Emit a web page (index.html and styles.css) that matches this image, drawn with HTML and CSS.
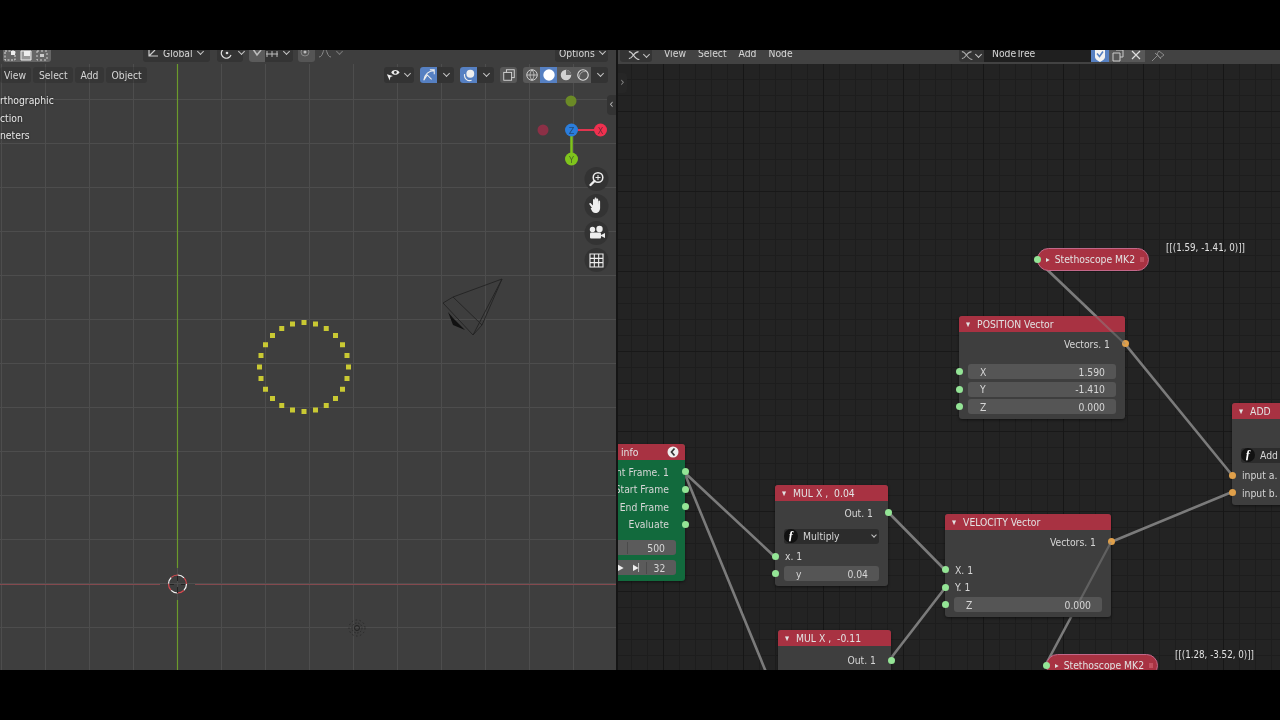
FILE: index.html
```html
<!DOCTYPE html>
<html lang="en">
<head>
  <meta charset="UTF-8">
  <title>Blender - Sverchok node tree</title>
  <link rel="stylesheet" href="styles.css">
</head>
<body>

  <div class="letterbox"></div>

  <div class="workspace">

    <!-- 3D viewport -->
    <div class="viewport">
      <div class="view-bar">
        <div class="pill mode-group">
          <svg class="ico" viewBox="0 0 14 12"><path d="M2 1h10v9H2z" fill="none" stroke="#ddd" stroke-dasharray="2 1.5"/><rect x="8" y="1" width="4" height="4" fill="#eee"/></svg>
          <svg class="ico" viewBox="0 0 14 12"><path d="M2 1h10v9H2z" fill="#999" stroke="#eee"/><rect x="5" y="1" width="6" height="5" fill="#eee"/></svg>
          <svg class="ico" viewBox="0 0 14 12"><path d="M2 1h10v9H2z" fill="none" stroke="#ccc" stroke-dasharray="2 2"/><rect x="5" y="4" width="4" height="3" fill="#ccc"/></svg>
        </div>
        <div class="pill dark global">
          <svg class="ico" viewBox="0 0 14 12"><path d="M3 1v8h9M3 9l6-6" fill="none" stroke="#ccc" stroke-width="1.2"/></svg>
          <span class="global-name">Global</span><span class="chev"></span>
        </div>
        <div class="pill dark pivot">
          <svg class="ico" viewBox="0 0 14 12"><path d="M9 2a5 5 0 1 0 2 6" fill="none" stroke="#ddd" stroke-width="1.2"/><circle cx="7" cy="6" r="1.3" fill="#ddd"/></svg>
          <span class="chev"></span>
        </div>
        <div class="pill dark snap">
          <span class="snap-magnet"><svg class="ico" viewBox="0 0 14 12"><path d="M3 2l4 6 4-5M9 1l2 2" fill="none" stroke="#bbb" stroke-width="1.6"/></svg></span>
          <svg class="ico" viewBox="0 0 14 12"><path d="M1 7h12M2 4v6M7 4v6M12 4v6" fill="none" stroke="#bbb"/></svg>
          <span class="chev"></span>
        </div>
        <div class="pill prop"><svg class="ico" viewBox="0 0 14 12"><circle cx="7" cy="5" r="4" fill="none" stroke="#888"/><circle cx="7" cy="5" r="1.5" fill="#bbb"/></svg></div>
        <div class="pill fall">
          <svg class="ico" viewBox="0 0 14 12"><path d="M1 10c4 0 4-8 6-8s2 8 6 8" fill="none" stroke="#8a8a8a"/></svg>
          <span class="chev dim"></span>
        </div>
        <div class="spacer"></div>
        <div class="pill dark options">Options<span class="chev"></span></div>
      </div>

      <div class="tool-bar">
        <div class="menu-group">
          <span class="menu-item">View</span>
          <span class="menu-item">Select</span>
          <span class="menu-item">Add</span>
          <span class="menu-item">Object</span>
        </div>
        <div class="spacer"></div>
        <div class="shade-group">
          <div class="pill-row dark eye-btn">
            <svg class="ico-lg" viewBox="0 0 16 14"><path d="M6 4c2-3.500 7-3.500 9.500 0c-2.500 3.500-7.500 3.500-9.500 0z" fill="#eee"/><circle cx="10.700" cy="4" r="1.600" fill="#333"/><path d="M1 6l7 2-3 1.200-.8 4z" fill="#eee"/></svg>
            <span class="chev"></span>
          </div>
          <div class="pill-row dark">
            <span class="tog on"><svg class="ico-lg" viewBox="0 0 16 16"><path d="M2 14C3 7 8 3 14 3M9 2h5v5M2 14l4-6 5 5" fill="none" stroke="#eee" stroke-width="1.2"/></svg></span>
            <span class="tog"><span class="chev"></span></span>
          </div>
          <div class="pill-row dark">
            <span class="tog on"><svg class="ico-lg" viewBox="0 0 16 16"><circle cx="9.500" cy="6.500" r="4.500" fill="#eee"/><path d="M3 7a6 6 0 0 0 8 7" fill="none" stroke="#eee" stroke-width="1.3"/></svg></span>
            <span class="tog"><span class="chev"></span></span>
          </div>
          <div class="tog gray xray"><svg class="ico-lg" viewBox="0 0 16 16"><rect x="5" y="2" width="9" height="9" fill="none" stroke="#ddd"/><rect x="2" y="5" width="9" height="9" fill="#4a4a4a" stroke="#ddd"/></svg></div>
          <div class="pill-row shading">
            <span class="tog gray"><svg class="ico-lg" viewBox="0 0 16 16"><circle cx="8" cy="8" r="6" fill="none" stroke="#ddd"/><path d="M2 8h12M8 2c-3 4-3 8 0 12M8 2c3 4 3 8 0 12" fill="none" stroke="#ddd" stroke-width=".8"/></svg></span>
            <span class="tog on"><svg class="ico-lg" viewBox="0 0 16 16"><circle cx="8" cy="8" r="6.500" fill="#fff"/></svg></span>
            <span class="tog gray"><svg class="ico-lg" viewBox="0 0 16 16"><circle cx="8" cy="8" r="6" fill="#d2d2d2"/><path d="M8 2a6 6 0 0 1 6 6H8z" fill="#6e6e6e"/></svg></span>
            <span class="tog gray"><svg class="ico-lg" viewBox="0 0 16 16"><circle cx="8" cy="8" r="6" fill="none" stroke="#ddd" stroke-width="1.300"/><path d="M4 11a6 6 0 0 1 7-7" fill="none" stroke="#aaa"/></svg></span>
            <span class="tog plain"><span class="chev"></span></span>
          </div>
        </div>
      </div>

      <div class="view-info">
        <div>rthographic</div>
        <div>ction</div>
        <div>neters</div>
      </div>

      <!-- scene, all in screen coordinates -->
      <svg class="scene" viewBox="0 50 616 620">
        <path d="M177.500 64V568M177.500 600V670" stroke="#6c9a2c" stroke-width="1.200" fill="none"/>
        <path d="M0 584.500H160M195 584.500H616" stroke="#84494e" stroke-width="1.200" fill="none"/>

        <!-- circle verts -->
        <path fill="#c9c933" d="M301.500 320h5v5h-5zM313 321.500h5v5h-5zM323.750 326h5v5h-5zM333 333h5v5h-5zM340 342.250h5v5h-5zM344.500 353h5v5h-5zM346 364.500h5v5h-5zM344.500 376h5v5h-5zM340 386.750h5v5h-5zM333 396h5v5h-5zM323.750 403h5v5h-5zM313 407.500h5v5h-5zM301.500 409h5v5h-5zM290 407.500h5v5h-5zM279.250 403h5v5h-5zM270 396h5v5h-5zM263 386.750h5v5h-5zM258.500 376h5v5h-5zM257 364.500h5v5h-5zM258.500 353h5v5h-5zM263 342.250h5v5h-5zM270 333h5v5h-5zM279.250 326h5v5h-5zM290 321.500h5v5h-5z"/>

        <!-- camera -->
        <path d="M448 312l5 13 12 5-12-12z" fill="#111"/>
        <path d="M502 279L453 297L443 303L473 335L482 325L453 297M502 279L482 325M502 279L473 335" fill="none" stroke="#222" stroke-width=".9"/>

        <!-- 3d cursor -->
        <circle cx="177.500" cy="584" r="9" fill="none" stroke="#f2f2f2" stroke-width="1.200" stroke-dasharray="7 7.140"/>
        <circle cx="177.500" cy="584" r="9" fill="none" stroke="#d8484f" stroke-width="1.200" stroke-dasharray="7 7.140" stroke-dashoffset="7"/>
        <path d="M177.500 576V581M177.500 587V593M170 584.500H174M181 584.500H185" stroke="#222" fill="none"/>

        <!-- light -->
        <circle cx="357" cy="628" r="2.500" fill="none" stroke="#222"/>
        <circle cx="357" cy="628" r="5" fill="none" stroke="#2a2a2a" stroke-dasharray="1.500 1.500"/>
        <circle cx="357" cy="628" r="8" fill="none" stroke="#2a2a2a" stroke-dasharray="1.500 2.500"/>

        <!-- gizmo -->
        <circle cx="571" cy="101" r="5.500" fill="#6b8a26"/>
        <circle cx="543" cy="130" r="5.500" fill="#8c3046"/>
        <path d="M577 130H595" stroke="#e0354f" stroke-width="2"/>
        <path d="M571.500 136V154" stroke="#7fc41c" stroke-width="2.500"/>
        <circle cx="571.500" cy="130" r="6.500" fill="#2a7ddc"/>
        <circle cx="600.500" cy="130" r="6.500" fill="#f0304f"/>
        <circle cx="571.500" cy="159" r="6.500" fill="#7fc41c"/>
        <text class="axis" x="571.500" y="133.500">Z</text>
        <text class="axis" x="600.500" y="133.500">X</text>
        <text class="axis" x="571.500" y="162.500">Y</text>

        <!-- nav buttons -->
        <circle cx="596.500" cy="179" r="12" fill="#333"/>
        <circle cx="596.500" cy="206" r="12" fill="#333"/>
        <circle cx="596.500" cy="233" r="12" fill="#333"/>
        <circle cx="596.500" cy="260" r="12" fill="#333"/>
        <circle cx="598" cy="177.500" r="4.800" fill="none" stroke="#eee" stroke-width="1.500"/>
        <path d="M594.500 181L590.500 185" stroke="#eee" stroke-width="2.400" stroke-linecap="round"/>
        <path d="M595.500 177.500H600.500M598 175V180" stroke="#eee"/>
        <path d="M592 208l-2.500-3.500c-.7-1 .6-2 1.500-1l2 2V200c0-1.300 1.700-1.300 1.700 0v3.500V198.500c0-1.300 1.800-1.300 1.800 0v5V199.500c0-1.300 1.700-1.300 1.700 0v5l.2-3c0-1.300 1.700-1.200 1.700 0V208c0 3-2 5-4.500 5s-4-2-5-5z" fill="#eee"/>
        <circle cx="592.500" cy="229.500" r="2.700" fill="#eee"/>
        <circle cx="599.500" cy="229" r="3.200" fill="#eee"/>
        <rect x="590" y="232.500" width="11" height="6" rx="1" fill="#eee"/>
        <path d="M601 235l4-2v5l-4-2z" fill="#eee"/>
        <path d="M590 254h13v13h-13zM594.330 254v13M598.670 254v13M590 258.330h13M590 262.670h13" fill="none" stroke="#eee" stroke-width="1.100"/>
      </svg>

      <span class="side-tab">‹</span>
    </div>

    <!-- node editor -->
    <div class="editor">
      <div class="editor-bar">
        <div class="pill dark editor-type">
          <svg class="ico" viewBox="0 0 16 12"><path d="M1 1c5 0 6 9 12 9M1 9c5 0 4-7 11-8" fill="none" stroke="#ccc" stroke-width="1.300"/></svg>
          <span class="chev"></span>
        </div>
        <span class="bar-item">View</span>
        <span class="bar-item">Select</span>
        <span class="bar-item">Add</span>
        <span class="bar-item">Node</span>
        <div class="spacer"></div>
        <div class="pill dark tree-type">
          <svg class="ico" viewBox="0 0 16 12"><path d="M1 1c5 0 6 9 12 9M1 9c5 0 4-7 11-8" fill="none" stroke="#aaa" stroke-width="1.200"/></svg>
          <span class="chev"></span>
        </div>
        <div class="tree-name">NodeTree</div>
        <div class="tree-btn blue"><svg class="ico" viewBox="0 0 14 12"><path d="M2 0h10v7c0 2-3 4-5 5-2-1-5-3-5-5z" fill="#f2f2f2"/><path d="M4 3.500l2.500 3L10 1.500" fill="none" stroke="#5680c2" stroke-width="1.600"/></svg></div>
        <div class="tree-btn"><svg class="ico" viewBox="0 0 14 12"><path d="M5 0h7v7H9M2 3h7v8H2z" fill="none" stroke="#ccc"/></svg></div>
        <div class="tree-btn"><svg class="ico" viewBox="0 0 14 12"><path d="M3 1l8 8M11 1L3 9" fill="none" stroke="#ddd" stroke-width="1.200"/></svg></div>
        <div class="tree-pin"><svg class="ico" viewBox="0 0 14 12"><path d="M1 11l5-5M4 3l6 6M8 1l5 4-4 3-3-4z" fill="none" stroke="#888"/></svg></div>
      </div>

      <span class="side-tab open">›</span>

      <svg class="links" viewBox="618 50 662 620">
        <path d="M684 472L775 557M684 472L766 672M888 512L945 570M891 658L945 588M1111 542L1232 492M1036 259L1125 344L1232 475M1111 542L1045 666" fill="none" stroke="#7b7b7b" stroke-width="2.600"/>
      </svg>

      <div class="node node-info">
        <div class="node-head"><span class="info-title">info</span><span class="rewind"><svg viewBox="0 0 12 12"><circle cx="6" cy="6" r="5.500" fill="#eee"/><path d="M7.500 2.500L4.500 6l3 3.500" fill="none" stroke="#333" stroke-width="1.700"/></svg></span></div>
        <div class="node-body">
          <div class="row out">nt Frame. 1<i class="socket right"></i></div>
          <div class="row out">Start Frame<i class="socket right"></i></div>
          <div class="row out">End Frame<i class="socket right"></i></div>
          <div class="row out">Evaluate<i class="socket right"></i></div>
          <div class="info-field first"><span>1</span><span class="seg">500</span></div>
          <div class="info-field"><span class="play">▶</span><span class="play step">▶|</span><span class="seg mid">32</span></div>
        </div>
      </div>

      <div class="node node-mul1">
        <div class="node-head"><span class="caret">▾</span>MUL X ,&nbsp; 0.04</div>
        <div class="node-body">
          <div class="row out">Out. 1<i class="socket right"></i></div>
          <div class="select"><span class="fx">ƒ</span>Multiply<span class="chev"></span></div>
          <div class="row in">x. 1<i class="socket left"></i></div>
          <div class="row"><div class="field"><span>y</span><span>0.04</span></div><i class="socket left"></i></div>
        </div>
      </div>

      <div class="node node-mul2">
        <div class="node-head"><span class="caret">▾</span>MUL X ,&nbsp; -0.11</div>
        <div class="node-body">
          <div class="row out out-wide">Out. 1<i class="socket right"></i></div>
        </div>
      </div>

      <div class="node wide node-position">
        <div class="node-head"><span class="caret">▾</span>POSITION Vector</div>
        <div class="node-body">
          <div class="row out">Vectors. 1<i class="socket right orange"></i></div>
          <div class="gap"></div>
          <div class="row"><div class="field"><span>X</span><span>1.590</span></div><i class="socket left"></i></div>
          <div class="row"><div class="field"><span>Y</span><span>-1.410</span></div><i class="socket left"></i></div>
          <div class="row"><div class="field"><span>Z</span><span>0.000</span></div><i class="socket left"></i></div>
        </div>
      </div>

      <div class="node wide node-velocity">
        <div class="node-head"><span class="caret">▾</span>VELOCITY Vector</div>
        <div class="node-body">
          <div class="row out">Vectors. 1<i class="socket right orange"></i></div>
          <div class="gap"></div>
          <div class="row in">X. 1<i class="socket left"></i></div>
          <div class="row in">Y. 1<i class="socket left"></i></div>
          <div class="row"><div class="field"><span>Z</span><span>0.000</span></div><i class="socket left"></i></div>
        </div>
      </div>

      <div class="node node-add">
        <div class="node-head"><span class="caret">▾</span>ADD</div>
        <div class="node-body">
          <div class="row out"></div>
          <div class="select"><span class="fx">ƒ</span>Add<span class="chev"></span></div>
          <div class="row in">input a.<i class="socket left orange"></i></div>
          <div class="row in">input b.<i class="socket left orange"></i></div>
        </div>
      </div>

      <div class="scope scope-a"><i class="socket left"></i><span class="scope-caret">▸</span>Stethoscope MK2<span class="scope-bars">ıı</span></div>
      <div class="scope-note note-a">[[(1.59, -1.41, 0)]]</div>

      <div class="scope scope-b"><i class="socket left"></i><span class="scope-caret">▸</span>Stethoscope MK2<span class="scope-bars">ıı</span></div>
      <div class="scope-note note-b">[[(1.28, -3.52, 0)]]</div>

      <!-- links show faintly through the nodes they cross -->
      <svg class="links over" viewBox="618 50 662 620">
        <path d="M1085 306L1125 344M1111 542L1078 604" fill="none" stroke="#8a8a8a" stroke-width="2.200"/>
      </svg>
    </div>

  </div>

  <div class="letterbox"></div>

</body>
</html>
```

FILE: styles.css
```css
* {
  box-sizing: border-box;
}

html, body {
  margin: 0;
  height: 720px;
  overflow: hidden;
  background-color: #000;
}

body {
  font-family: "DejaVu Sans Condensed", "DejaVu Sans", sans-serif;
  font-stretch: condensed;
  font-size: 10.3px;
  color: #d6d6d6;
}

.letterbox {
  height: 50px;
  background-color: #000;
}

.workspace {
  display: flex;
  height: 620px;
  gap: 2px;
  background-color: #151515;
  overflow: hidden;
  filter: blur(.35px);
}

.spacer {
  flex: 1;
}

/* 3D viewport */
.viewport {
  position: relative;
  width: 616px;
  overflow: hidden;
  background-color: #3e3e3e;
  background-image:
    linear-gradient(to right, #4d4d4d 1px, transparent 1px),
    linear-gradient(to bottom, #4d4d4d 1px, transparent 1px);
  background-size: 44px 44px;
  background-position: 1px 0, 0 5px;
}

.scene {
  position: absolute;
  left: 0;
  top: 0;
  width: 616px;
  height: 620px;
}

.axis {
  font-size: 9px;
  text-anchor: middle;
  fill: #20242c;
  fill-opacity: .6;
}

.view-bar {
  position: relative;
  z-index: 1;
  display: flex;
  align-items: flex-start;
  height: 14px;
  padding-right: 8px;
  background-color: #3e3e3e;
  overflow: hidden;
}

.pill {
  display: flex;
  align-items: center;
  height: 22px;
  margin-top: -10px;
  padding-top: 4px;
  border-radius: 3px;
}

.pill.dark {
  background-color: #343434;
}

.ico {
  width: 14px;
  height: 12px;
  flex: none;
}

.ico-lg {
  width: 14px;
  height: 14px;
  flex: none;
}

.chev {
  width: 5px;
  height: 5px;
  margin: -3px 4px 0 5px;
  flex: none;
  border-right: 1px solid #c4c4c4;
  border-bottom: 1px solid #c4c4c4;
  transform: rotate(45deg);
}

.chev.dim {
  border-color: #777;
}

.mode-group {
  margin-left: 3px;
  width: 48px;
  gap: 2px;
  padding-top: 9px;
  background-color: #666;
}

.global {
  margin-left: 92px;
  width: 67px;
  padding-left: 3px;
  justify-content: space-between;
}

.global-name {
  margin-left: 3px;
  flex: 1;
}

.global .chev {
  margin-right: 7px;
}

.pivot {
  margin-left: 7px;
  width: 26px;
  padding-left: 3px;
}

.snap {
  margin-left: 6px;
  width: 44px;
}

.snap-magnet {
  display: flex;
  align-items: center;
  height: 100%;
  padding: 0 1px;
  border-radius: 3px 0 0 3px;
  background-color: #5b5b5b;
}

.prop {
  margin-left: 5px;
  width: 17px;
  background-color: #555;
}

.fall {
  margin-left: 3px;
}

.options {
  width: 53px;
  padding-left: 4px;
  justify-content: space-between;
}

.tool-bar {
  position: relative;
  z-index: 1;
  display: flex;
  align-items: center;
  height: 22px;
  padding-right: 8px;
}

.menu-group {
  display: flex;
  gap: 2px;
}

.menu-item {
  display: flex;
  align-items: center;
  height: 16px;
  padding: 0 5.500px;
  border-radius: 3px;
  background-color: rgba(40, 40, 40, .35);
}

.menu-item:first-child {
  padding-left: 4px;
}

.shade-group {
  display: flex;
  align-items: center;
  gap: 6px;
}

.pill-row {
  display: flex;
  align-items: center;
  height: 16px;
  border-radius: 3px;
}

.pill-row.dark {
  background-color: #333;
}

.eye-btn {
  padding-left: 2px;
}

.tog {
  display: flex;
  align-items: center;
  justify-content: center;
  height: 16px;
  width: 17px;
}

.tog.on {
  background-color: #5680c2;
  border-radius: 3px 0 0 3px;
}

.tog.gray {
  background-color: #585858;
}

.xray {
  border-radius: 3px;
}

.shading .tog.on {
  border-radius: 0;
}

.shading .tog:first-child {
  border-radius: 3px 0 0 3px;
}

.tog.plain {
  background-color: #333;
  border-radius: 0 3px 3px 0;
}

.view-info {
  position: absolute;
  z-index: 1;
  left: 0;
  top: 42px;
  color: #e8e8e8;
  line-height: 17.500px;
  text-shadow: 0 0 2px #222;
}

.side-tab {
  position: absolute;
  z-index: 1;
  right: 0;
  top: 45px;
  width: 9px;
  height: 20px;
  line-height: 18px;
  text-align: center;
  border-radius: 4px 0 0 4px;
  background-color: #333;
  color: #bbb;
  font-size: 12px;
}

.side-tab.open {
  right: auto;
  left: 0;
  top: 23px;
  border-radius: 0 4px 4px 0;
  background-color: #262626;
  color: #888;
}

/* Node editor */
.editor {
  position: relative;
  flex: 1;
  overflow: hidden;
  background-color: #232323;
  background-image:
    linear-gradient(to right, #161616 1px, transparent 1px),
    linear-gradient(to bottom, #181818 1px, transparent 1px),
    linear-gradient(to right, #1d1d1d 1px, transparent 1px),
    linear-gradient(to bottom, #1d1d1d 1px, transparent 1px);
  background-size: 80px 80px, 80px 80px, 16px 16px, 16px 16px;
  background-position: 45px 0, 0 61px, 13px 0, 0 13px;
}

.editor-bar {
  position: relative;
  z-index: 2;
  display: flex;
  align-items: flex-start;
  height: 14px;
  padding-right: 115px;
  background-color: #424242;
  overflow: hidden;
}

.editor-type {
  margin-left: 2px;
  width: 32px;
  padding: 9px 0 0 8px;
  background-color: #333;
}

.editor-type .chev {
  margin-left: 2px;
}

.bar-item {
  margin-top: -3px;
  line-height: 12px;
  margin-left: 12px;
}

.tree-type {
  width: 25px;
  padding: 9px 0 0 2px;
  border-radius: 3px 0 0 3px;
}

.tree-type .chev {
  margin-left: 1px;
}

.tree-name {
  width: 107px;
  height: 12px;
  padding-left: 8px;
  line-height: 6px;
  background-color: #1f1f1f;
}

.tree-btn {
  display: flex;
  align-items: center;
  justify-content: center;
  width: 18px;
  height: 12px;
  background-color: #585858;
}

.tree-btn.blue {
  background-color: #5680c2;
}

.tree-pin {
  margin-left: 6px;
  line-height: 0;
}

.links {
  position: absolute;
  left: 0;
  top: 0;
  width: 662px;
  height: 620px;
}

.links.over {
  z-index: 1;
  opacity: .45;
}

.node {
  position: absolute;
  z-index: 1;
  width: 113px;
  border-radius: 3px;
  background-color: #3e3e3e;
  box-shadow: 0 1px 3px rgba(0, 0, 0, .5);
}

.node.wide {
  width: 166px;
}

.node-head {
  display: flex;
  align-items: center;
  height: 16px;
  padding-left: 7px;
  border-radius: 3px 3px 0 0;
  background-color: #a83242;
  color: #e2e2e2;
  white-space: nowrap;
}

.caret {
  margin-right: 7px;
  font-size: 9px;
}

.node-body {
  padding: 3px 0 3.500px;
}

.row {
  position: relative;
  display: flex;
  align-items: center;
  height: 17.500px;
  padding: 0 9px;
}

.row.out {
  justify-content: flex-end;
  padding-right: 15px;
}

.row.in {
  padding-left: 10px;
}

.gap {
  height: 10.500px;
}

.socket {
  position: absolute;
  top: 50%;
  width: 7px;
  height: 7px;
  margin-top: -3.500px;
  border-radius: 50%;
  background-color: #94e596;
}

.socket.left {
  left: -3.500px;
}

.socket.right {
  right: -3.500px;
}

.socket.orange {
  background-color: #e0a04a;
}

.field {
  display: flex;
  justify-content: space-between;
  align-items: center;
  flex: 1;
  height: 15px;
  padding: 0 11px 0 12px;
  border-radius: 3px;
  background-color: #555;
}

.select {
  display: flex;
  align-items: center;
  height: 15px;
  margin: 7px 9px 4px;
  border-radius: 3px;
  background-color: #2c2c2c;
}

.select .chev {
  margin-left: auto;
  margin-right: 3px;
  width: 4px;
  height: 4px;
}

.fx {
  width: 14px;
  height: 14px;
  margin-right: 5px;
  border-radius: 50%;
  background-color: #111;
  color: #fff;
  font: italic bold 12px/13px "Liberation Serif", serif;
  text-align: center;
}

.node-info {
  left: -60px;
  top: 394px;
  width: 127px;
  height: 137px;
  background-color: #126a3d;
}

.node-info .node-head {
  justify-content: space-between;
  padding: 0 6px 0 63px;
}

.rewind {
  width: 12px;
  height: 12px;
  line-height: 0;
}

.node-info .row.out {
  padding-right: 16px;
}

.info-field {
  position: relative;
  display: flex;
  align-items: center;
  height: 15px;
  margin: 5px 9px 0 0;
  padding-left: 60px;
  border-radius: 3px;
  background-color: #5b5b5b;
}

.info-field.first {
  margin-top: 7px;
}

.info-field.first span:first-child {
  visibility: hidden;
  width: 9px;
}

.play {
  width: 9px;
  font-size: 8px;
  color: #eee;
}

.play.step {
  width: 17px;
  padding-left: 6px;
  letter-spacing: -1px;
}

.seg {
  flex: 1;
  text-align: right;
  padding-right: 11px;
  border-left: 1px solid #4a4a4a;
}

.seg.mid {
  text-align: center;
  padding-right: 4px;
  margin-left: 2px;
}

.node-mul1 {
  left: 157px;
  top: 435px;
  height: 101px;
}

.node-mul2 {
  left: 160px;
  top: 580px;
  height: 60px;
}

.node-mul2 .row.out {
  margin-top: 2.500px;
}

.node-position {
  left: 341px;
  top: 266px;
}

.node-velocity {
  left: 327px;
  top: 464px;
}

.node-add {
  left: 614px;
  top: 353px;
}

.node-add .select {
  margin-top: 8px;
}

.scope {
  position: absolute;
  z-index: 1;
  display: flex;
  align-items: center;
  width: 112px;
  height: 23px;
  padding: 0 4px 1px 8px;
  border-radius: 12px;
  background-color: #a83242;
  border: 1px solid #c2688a;
  color: #e2e2e2;
  white-space: nowrap;
}

.scope .socket.left {
  left: -4px;
}

.scope-caret {
  margin-right: 5px;
  font-size: 8px;
  color: #ddd;
}

.scope-bars {
  margin-left: auto;
  color: #f08a9a;
  font-size: 8px;
}

.scope-a {
  left: 419px;
  top: 198px;
}

.scope-b {
  left: 428px;
  top: 604px;
}

.scope-note {
  position: absolute;
  z-index: 1;
  color: #e2e2e2;
  font-size: 9.700px;
  line-height: 12px;
  white-space: nowrap;
}

.note-a {
  left: 548px;
  top: 192px;
}

.note-b {
  left: 557px;
  top: 599px;
}
```
